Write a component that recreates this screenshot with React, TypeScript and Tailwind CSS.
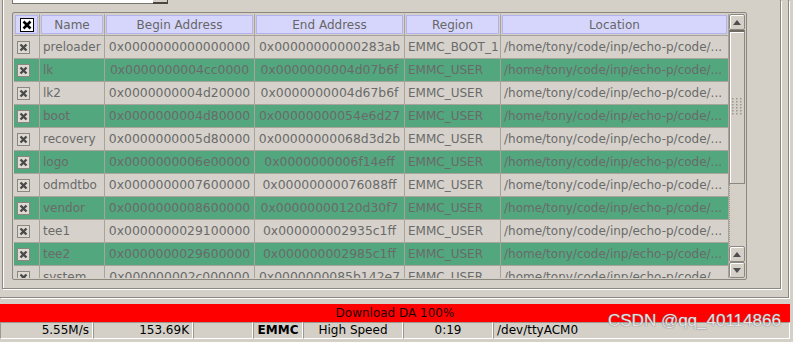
const rows = [
  ['preloader', '0x0000000000000000', '0x00000000000283ab', 'EMMC_BOOT_1'],
  ['lk', '0x0000000004cc0000', '0x0000000004d07b6f', 'EMMC_USER'],
  ['lk2', '0x0000000004d20000', '0x0000000004d67b6f', 'EMMC_USER'],
  ['boot', '0x0000000004d80000', '0x00000000054e6d27', 'EMMC_USER'],
  ['recovery', '0x0000000005d80000', '0x00000000068d3d2b', 'EMMC_USER'],
  ['logo', '0x0000000006e00000', '0x0000000006f14eff', 'EMMC_USER'],
  ['odmdtbo', '0x0000000007600000', '0x00000000076088ff', 'EMMC_USER'],
  ['vendor', '0x0000000008600000', '0x00000000120d30f7', 'EMMC_USER'],
  ['tee1', '0x0000000029100000', '0x000000002935c1ff', 'EMMC_USER'],
  ['tee2', '0x0000000029600000', '0x000000002985c1ff', 'EMMC_USER'],
  ['system', '0x000000002c000000', '0x0000000085b142e7', 'EMMC_USER'],
];

const location = '/home/tony/code/inp/echo-p/code/...';

function CheckBox({ header }: { header?: boolean }) {
  if (header) {
    return (
      <svg width="14" height="14" viewBox="0 0 14 14">
        <rect x="0.5" y="0.5" width="13" height="13" fill="#fff" stroke="#000" />
        <path d="M3.5 3.5 L10.5 10.5 M10.5 3.5 L3.5 10.5" stroke="#000" strokeWidth="2.6" />
      </svg>
    );
  }
  return (
    <svg width="13" height="13" viewBox="0 0 13 13">
      <rect x="0.5" y="0.5" width="12" height="12" fill="#dedad3" stroke="#8a8780" />
      <path d="M3.5 3.5 L9.5 9.5 M9.5 3.5 L3.5 9.5" stroke="#4a4a4a" strokeWidth="2.4" />
    </svg>
  );
}

function Arrow({ down }: { down?: boolean }) {
  return (
    <div className="h-[16px] border border-[#8c8880] rounded-[2px] bg-[#d4d0c8] shadow-[inset_1px_1px_0_#fff] flex items-center justify-center">
      <svg width="8" height="5" viewBox="0 0 8 5">
        <path d={down ? 'M0 0 L8 0 L4 5 Z' : 'M0 5 L8 5 L4 0 Z'} fill="#4e4e4e" />
      </svg>
    </div>
  );
}

function HeaderCell({ w, label, children }: { w: string; label?: string; children?: React.ReactNode }) {
  return (
    <div className={`${w} h-[22px] border-r border-b border-[#a8a49c] p-px`}>
      <div className="h-full border border-[#b2b2ee] bg-[#d6d6fc] flex items-center justify-center text-[#666]">
        {label}
        {children}
      </div>
    </div>
  );
}

function Scrollbar() {
  return (
    <div className="w-[16px] flex flex-col">
      <Arrow />
      {/* thumb */}
      <div className="h-[154px] border border-[#8c8880] border-t-2 border-t-[#6e6a64] bg-[#d4d0c8] shadow-[inset_1px_1px_0_#fff] flex flex-col items-center pt-[66px]">
        <svg width="10" height="18" viewBox="0 0 10 18">
          {[0, 1, 2, 3, 4, 5].map((r) =>
            [0, 1, 2].map((c) => (
              <rect key={`${r}-${c}`} x={c * 4} y={r * 3} width="1.5" height="1.5" fill="#9a968e" />
            ))
          )}
        </svg>
      </div>
      {/* trough */}
      <div className="flex-1 border-l border-dotted border-[#9a968e]" />
      <Arrow />
      <Arrow down />
    </div>
  );
}

function StatusCell({ w, children, className = '' }: { w: string; children?: React.ReactNode; className?: string }) {
  return (
    <div
      className={`${w} h-[17px] border-t border-l border-[#9c9890] border-r border-r-white border-b border-b-white flex items-center text-[12px] leading-[15px] text-black ${className}`}
    >
      {children}
    </div>
  );
}

export default function App() {
  return (
    <div
      className="relative w-[793px] h-[342px] overflow-hidden bg-[#d4d0c8] flex flex-col"
      style={{ fontFamily: '"DejaVu Sans", sans-serif' }}
    >
      {/* Upper area */}
      <div className="w-[789px] h-[298px] border-r border-b border-[#8c8880] shadow-[1px_1px_0_#fff]">
        {/* Group box */}
        <div className="ml-[2px] w-[779px] h-[289px] border-l border-r border-b border-[#8c8880] shadow-[inset_1px_0_0_#fff,1px_1px_0_#fff]">
          {/* Combo stub */}
          <div className="ml-[9px] w-[156px] h-[4px] flex">
            <div className="flex-1 bg-white border-l border-b border-[#7a766e]" />
            <div className="w-[15px] border-b-2 border-r border-[#4a4640] bg-[#d4d0c8]" />
          </div>

          {/* Table frame */}
          <div className="ml-[9px] mt-[8px] w-[735px] h-[268px] border border-[#8c8880] rounded-[2px] p-px flex">
            <div className="w-[715px] flex flex-col">
              {/* header */}
              <div className="flex text-[12px]">
                <HeaderCell w="w-[26px]">
                  <CheckBox header />
                </HeaderCell>
                <HeaderCell w="w-[65px]" label="Name" />
                <HeaderCell w="w-[150px]" label="Begin Address" />
                <HeaderCell w="w-[150px]" label="End Address" />
                <HeaderCell w="w-[96px]" label="Region" />
                <HeaderCell w="w-[228px]" label="Location" />
              </div>
              {/* body */}
              <div className="h-[242px] overflow-hidden">
                {rows.map((r, i) => (
                  <div
                    key={r[0]}
                    className={`flex h-[23px] border-b border-[#a8a49c] text-[12px] text-[#6a6a6a] whitespace-nowrap ${
                      i % 2 === 1 ? 'bg-[#52a77e]' : 'bg-[#d6d2cb]'
                    }`}
                  >
                    <div className="w-[26px] border-r border-[#a8a49c] flex items-center pl-[3px]">
                      <CheckBox />
                    </div>
                    <div className="w-[65px] border-r border-[#a8a49c] flex items-center pl-[3px] overflow-hidden">
                      {r[0]}
                    </div>
                    <div className="w-[150px] border-r border-[#a8a49c] flex items-center justify-center text-[12.4px] overflow-hidden">
                      {r[1]}
                    </div>
                    <div className="w-[150px] border-r border-[#a8a49c] flex items-center justify-center text-[12.4px] overflow-hidden">
                      {r[2]}
                    </div>
                    <div className="w-[96px] border-r border-[#a8a49c] flex items-center pl-[3px] overflow-hidden">
                      {r[3]}
                    </div>
                    <div className="w-[228px] border-r border-[#a8a49c] flex items-center pl-[3px] overflow-hidden">
                      {location}
                    </div>
                  </div>
                ))}
              </div>
            </div>
            <Scrollbar />
          </div>
        </div>
      </div>

      {/* Progress bar */}
      <div className="mt-[6px] w-[790px] h-[18px] bg-[#ff0000] flex items-center justify-center text-[12px] text-[#1a0000]">
        Download DA 100%
      </div>

      {/* Status bar */}
      <div className="flex w-[790px]">
        <StatusCell w="w-[93px]" className="justify-end pr-[3px]">5.55M/s</StatusCell>
        <StatusCell w="w-[100px]" className="justify-end pr-[3px]">153.69K</StatusCell>
        <StatusCell w="w-[60px]" />
        <StatusCell w="w-[50px]" className="justify-center font-bold">EMMC</StatusCell>
        <StatusCell w="w-[100px]" className="justify-center">High Speed</StatusCell>
        <StatusCell w="w-[90px]" className="justify-center">0:19</StatusCell>
        <StatusCell w="w-[297px]" className="pl-[3px]">/dev/ttyACM0</StatusCell>
      </div>

      {/* watermark */}
      <div
        className="absolute left-[608px] top-[310px] text-[17px] leading-[22px] text-white/80 [text-shadow:0_0_1px_#777,0_0_1px_#777]"
        style={{ fontFamily: '"Liberation Sans", Arial, sans-serif' }}
      >
        CSDN @qq_40114866
      </div>
    </div>
  );
}
